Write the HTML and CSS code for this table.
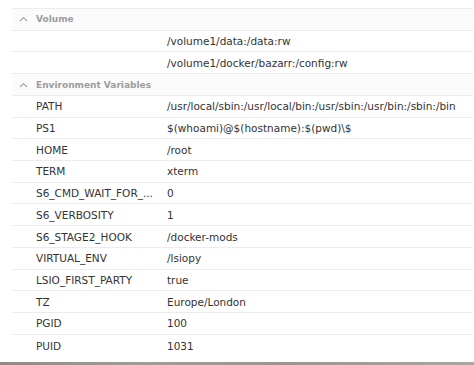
FILE: index.html
```html
<!DOCTYPE html>
<html>
<head>
<meta charset="utf-8">
<link rel="stylesheet" href="styles.css">
</head>
<body>
<div class="page">
  <div class="table">
    <div class="row group">
      <svg class="chev" width="9" height="6" viewBox="0 0 9 6"><path d="M1 5 L4.5 1.5 L8 5" fill="none" stroke="#a8a8a8" stroke-width="1.2"/></svg>
      <span class="gtitle">Volume</span>
    </div>
    <div class="row"><span class="key"></span><span class="val">/volume1/data:/data:rw</span></div>
    <div class="row"><span class="key"></span><span class="val">/volume1/docker/bazarr:/config:rw</span></div>
    <div class="row group">
      <svg class="chev" width="9" height="6" viewBox="0 0 9 6"><path d="M1 5 L4.5 1.5 L8 5" fill="none" stroke="#a8a8a8" stroke-width="1.2"/></svg>
      <span class="gtitle">Environment Variables</span>
    </div>
    <div class="row"><span class="key">PATH</span><span class="val">/usr/local/sbin:/usr/local/bin:/usr/sbin:/usr/bin:/sbin:/bin</span></div>
    <div class="row"><span class="key">PS1</span><span class="val">$(whoami)@$(hostname):$(pwd)\$</span></div>
    <div class="row"><span class="key">HOME</span><span class="val">/root</span></div>
    <div class="row"><span class="key">TERM</span><span class="val">xterm</span></div>
    <div class="row"><span class="key">S6_CMD_WAIT_FOR_...</span><span class="val">0</span></div>
    <div class="row"><span class="key">S6_VERBOSITY</span><span class="val">1</span></div>
    <div class="row"><span class="key">S6_STAGE2_HOOK</span><span class="val">/docker-mods</span></div>
    <div class="row"><span class="key">VIRTUAL_ENV</span><span class="val">/lsiopy</span></div>
    <div class="row"><span class="key">LSIO_FIRST_PARTY</span><span class="val">true</span></div>
    <div class="row"><span class="key">TZ</span><span class="val">Europe/London</span></div>
    <div class="row"><span class="key">PGID</span><span class="val">100</span></div>
    <div class="row last"><span class="key">PUID</span><span class="val">1031</span></div>
  </div>
  <div class="strip"></div>
</div>
</body>
</html>
```
FILE: styles.css
```css
html, body {
  margin: 0;
  padding: 0;
  background: #ffffff;
}
.page {
  width: 474px;
  height: 365px;
  overflow: hidden;
  display: flex;
  flex-direction: column;
  padding-top: 8px;
  box-sizing: border-box;
  font-family: "DejaVu Sans", Verdana, sans-serif;
  font-size: 10.5px;
  color: #333333;
}
.table {
  margin-left: 12px;
  width: 461px;
  border-top: 1px solid #ececec;
  display: flex;
  flex-direction: column;
}
.row {
  height: 21.73px;
  box-sizing: border-box;
  border-bottom: 1px solid #ececec;
  display: flex;
  align-items: center;
}
.row.last {
  border-bottom: none;
}
.group {
  background: #fbfbfb;
}
.chev {
  margin-left: 7px;
  margin-right: 8px;
}
.gtitle {
  font-weight: bold;
  font-size: 9px;
  color: #9b9b9b;
}
.key {
  width: 131px;
  padding-left: 24px;
  flex: none;
  white-space: nowrap;
}
.val {
  white-space: nowrap;
}
.strip {
  margin-top: auto;
  height: 3px;
  background: linear-gradient(90deg, #8f8a86, #a09c98 30%, #9a958f 60%, #aaa6a2);
}
```
